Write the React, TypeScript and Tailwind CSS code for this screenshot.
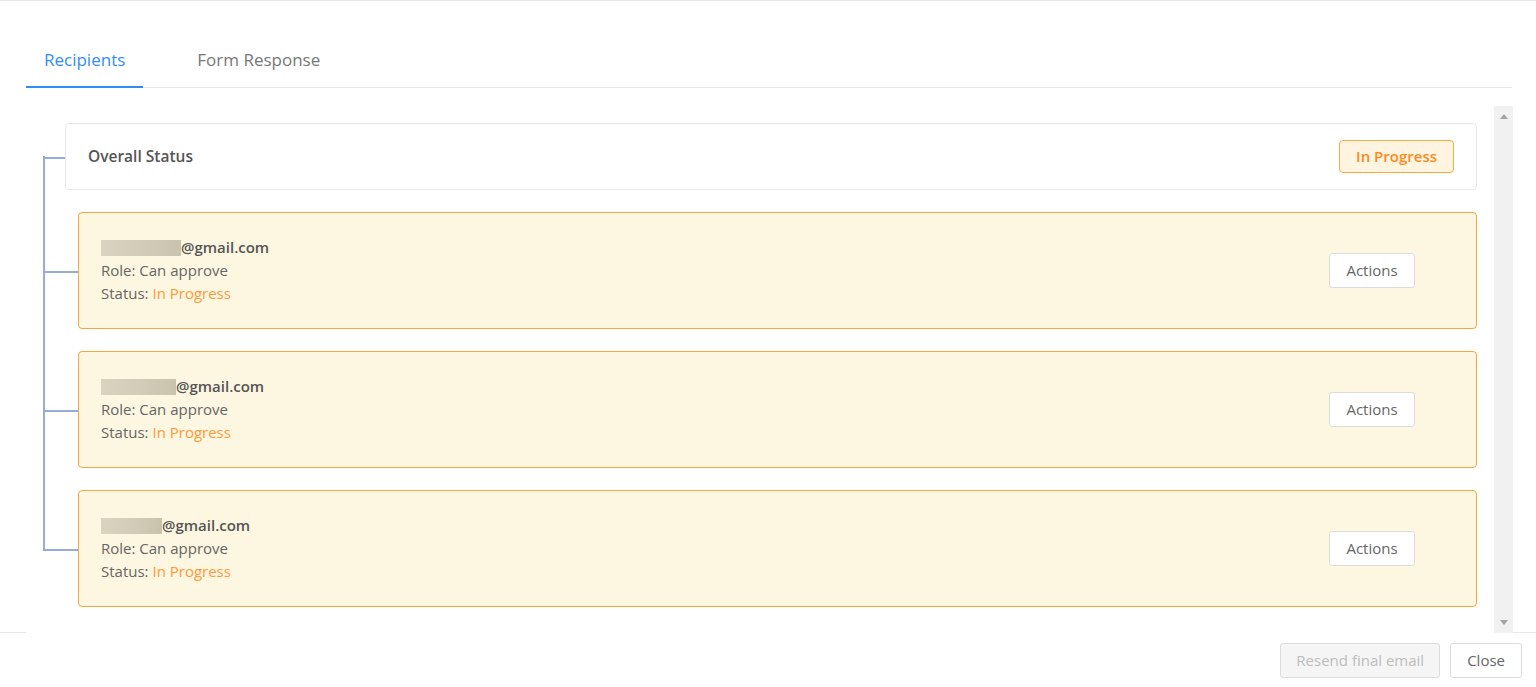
import { useState } from "react";

type Recipient = {
  id: number;
  maskWidth: number;
  role: string;
  status: string;
};

const recipients: Recipient[] = [
  { id: 1, maskWidth: 80, role: "Can approve", status: "In Progress" },
  { id: 2, maskWidth: 75, role: "Can approve", status: "In Progress" },
  { id: 3, maskWidth: 61, role: "Can approve", status: "In Progress" },
];

const font = { fontFamily: '"Open Sans", "Noto Sans", sans-serif' };

const RecipientCard = ({ item }: { item: Recipient }) => (
  <div className="relative flex">
    <div className="relative w-[52px] shrink-0">
      <div className="absolute left-[17px] right-0 top-1/2 h-[2px] bg-[#95acd6]" />
    </div>
    <div className="flex flex-1 items-center justify-between rounded-[4px] border border-[#f7a740] bg-[#fdf6e0] py-[23px] pl-[22px] pr-[61px]">
      <div className="flex flex-col text-[15px] leading-[23px] text-[#666]">
        <div className="flex items-center font-semibold text-[#555]">
          <span
            className="inline-block h-[16px] bg-gradient-to-r from-[#d9d3c0] via-[#d3ccb8] to-[#c9c2ad]"
            style={{ width: item.maskWidth }}
          />
          <span>@gmail.com</span>
        </div>
        <div>Role: {item.role}</div>
        <div>
          Status: <span className="text-[#ff9a3a]">{item.status}</span>
        </div>
      </div>
      <button className="h-[35px] w-[86px] rounded-[3px] border border-[#dcdcdc] bg-white text-[15px] text-[#666]">
        Actions
      </button>
    </div>
  </div>
);

export default function App() {
  const [tab, setTab] = useState("recipients");

  const tabClass = (active: boolean) =>
    active
      ? "-mb-px border-b-2 border-[#2f8ef5] px-[18px] pb-[14px] pt-[12px] font-medium text-[#2f8ef5]"
      : "-mb-px border-b-2 border-transparent px-[18px] pb-[14px] pt-[12px] text-[#777]";

  return (
    <div className="flex h-[687px] w-full flex-col border-t border-[#e8e8e8] bg-white" style={font}>
      <div className="pl-[26px] pr-[24px] pt-[35px]">
        <div className="flex gap-[36px] border-b border-[#e8e8e8] text-[17px] leading-[24px]">
          <button onClick={() => setTab("recipients")} className={tabClass(tab === "recipients")}>
            Recipients
          </button>
          <button onClick={() => setTab("form")} className={tabClass(tab === "form")}>
            Form Response
          </button>
        </div>
      </div>

      <div className="relative z-10 ml-[26px] mr-[23px] mt-[18px] flex h-[527px] bg-white">
        <div className="relative flex flex-1 flex-col gap-[22px] pr-[17px] pt-[17px]">
          <div className="absolute left-[17px] top-[50px] h-[393px] w-[2px] bg-[#95acd6]" />
          <div className="relative flex">
            <div className="relative w-[39px] shrink-0">
              <div className="absolute left-[17px] right-0 top-1/2 h-[2px] bg-[#95acd6]" />
            </div>
            <div className="flex h-[67px] flex-1 items-center justify-between rounded-[4px] border border-[#e8e8e8] bg-white pl-[22px] pr-[22px]">
              <span className="text-[15.5px] font-semibold text-[#555]">Overall Status</span>
              <span className="flex h-[33px] items-center rounded-[4px] border border-[#ffa940] bg-[#fff4df] px-[16px] text-[15px] font-semibold text-[#fa8c1e]">
                In Progress
              </span>
            </div>
          </div>
          {recipients.map((r) => (
            <RecipientCard key={r.id} item={r} />
          ))}
        </div>
        <div className="flex w-[19px] flex-col items-center justify-between bg-[#f1f1f1] py-[8px]">
          <svg width="8" height="5" viewBox="0 0 8 5">
            <path d="M4 0L8 5H0z" fill="#a3a3a3" />
          </svg>
          <svg width="8" height="5" viewBox="0 0 8 5">
            <path d="M0 0H8L4 5z" fill="#a3a3a3" />
          </svg>
        </div>
      </div>

      <div className="-mt-px flex flex-1 items-start justify-end gap-[10px] border-t border-[#e8e8e8] pr-[14px] pt-[10px]">
        <button
          disabled
          className="h-[35px] rounded-[3px] border border-[#dcdcdc] bg-[#f5f5f5] px-[15px] text-[15px] text-[#bdbdbd]"
        >
          Resend final email
        </button>
        <button className="h-[35px] rounded-[3px] border border-[#dcdcdc] bg-white px-[16px] text-[15px] text-[#666]">
          Close
        </button>
      </div>
    </div>
  );
}
